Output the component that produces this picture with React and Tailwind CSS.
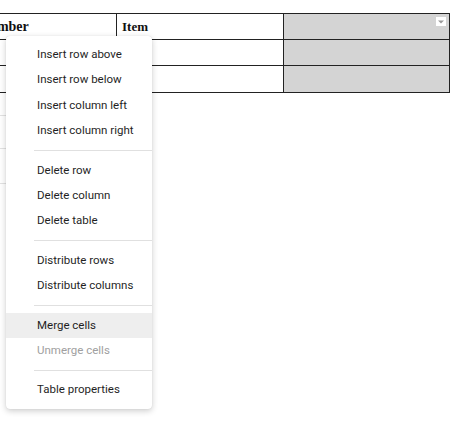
import React from "react";

const groups = [
  ["Insert row above", "Insert row below", "Insert column left", "Insert column right"],
  ["Delete row", "Delete column", "Delete table"],
  ["Distribute rows", "Distribute columns"],
  ["Merge cells", "Unmerge cells"],
  ["Table properties"],
];

function Cell({ children, grey, last, bottom, width, marker }) {
  return (
    <div
      className={
        "relative h-[26px] flex items-center px-[5px] border-[#222] " +
        (grey ? "bg-[#d4d4d4] " : "bg-white ") +
        (last ? "" : "border-r ") +
        (bottom ? "" : "border-b ")
      }
      style={{ width }}
    >
      {children}
      {marker && (
        <div className="absolute right-[3px] top-[3px] w-[10px] h-[9px] bg-white flex items-center justify-center">
          <svg width="6" height="4" viewBox="0 0 6 4">
            <path d="M0 0.5 L6 0.5 L3 3.5 Z" fill="#9a9a9a" />
          </svg>
        </div>
      )}
    </div>
  );
}

export default function App() {
  return (
    <div
      className="relative w-[474px] h-[429px] bg-white overflow-hidden"
      style={{ fontFamily: "Roboto, 'Liberation Sans', sans-serif" }}
    >
      <div className="pt-[13px] flex flex-col">
        <div
          className="ml-[-27px] w-[477px] border border-[#222] flex flex-col"
          style={{ fontFamily: "'Liberation Serif', serif" }}
        >
          <div className="flex">
            <Cell width={143}>
              <span className="font-bold text-[14px] text-[#111]">Number</span>
            </Cell>
            <Cell width={167}>
              <span className="font-bold text-[13px] text-[#111]">Item</span>
            </Cell>
            <Cell width={165} grey last marker />
          </div>
          <div className="flex">
            <Cell width={143} />
            <Cell width={167} />
            <Cell width={165} grey last />
          </div>
          <div className="flex">
            <Cell width={143} bottom />
            <Cell width={167} bottom />
            <Cell width={165} grey last bottom />
          </div>
        </div>
        <div className="w-[6px] flex flex-col">
          <div className="h-[23px] border-b border-[#e2e2e2]" />
          <div className="h-[33px] border-b border-[#e2e2e2]" />
          <div className="h-[35px] border-b border-[#e2e2e2]" />
        </div>
      </div>

      <div className="absolute left-[6px] top-[36px] w-[146px] bg-white rounded-[4px] shadow-[0_2px_6px_rgba(0,0,0,0.2),0_0_1px_rgba(0,0,0,0.15)] py-[6px]">
        {groups.map((g, gi) => (
          <div key={gi}>
            {gi > 0 && <div className="h-px bg-[#e0e0e0] my-[6.5px] ml-[28px]" />}
            {g.map((item) => (
              <div
                key={item}
                className={
                  "h-[25.4px] flex items-center pl-[31px] text-[11.5px] whitespace-nowrap " +
                  (item === "Merge cells" ? "bg-[#eeeeee] " : "") +
                  (item === "Unmerge cells" ? "text-[#a0a0a0]" : "text-[#1f1f1f]")
                }
              >
                {item}
              </div>
            ))}
          </div>
        ))}
      </div>
    </div>
  );
}
